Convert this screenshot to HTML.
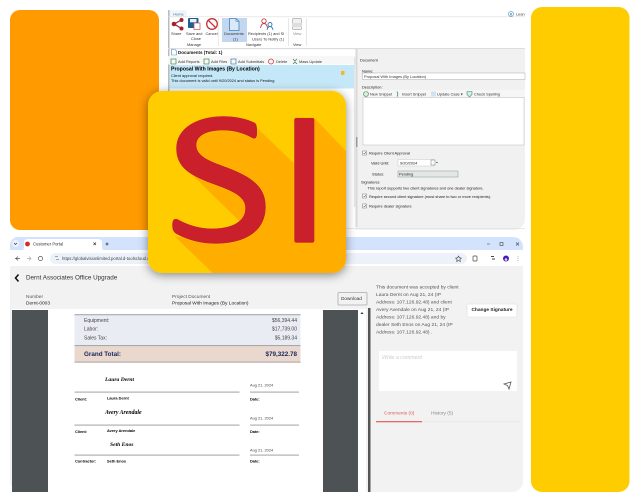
<!DOCTYPE html>
<html lang="en"><head><meta charset="utf-8"><title>SI</title>
<style>
html,body{margin:0;padding:0;background:#fff}
body{width:632px;height:504px;overflow:hidden}
svg{display:block}
text{dominant-baseline:central;font-family:"Liberation Sans",sans-serif;white-space:pre}
.b{font-weight:700}
.s{font-family:"Liberation Serif",serif;font-style:italic;font-weight:700}
</style></head><body>
<svg xmlns="http://www.w3.org/2000/svg" width="632" height="504" viewBox="0 0 632 504" fill="#222">
<defs>
<filter id="soft" x="-2%" y="-2%" width="104%" height="104%"><feGaussianBlur stdDeviation=".24"/></filter>
<filter id="ds" x="-20%" y="-20%" width="140%" height="140%"><feDropShadow dx="0" dy="2" stdDeviation="5" flood-color="#000" flood-opacity=".45"/></filter>
<clipPath id="lc"><rect x="148" y="91" width="198" height="182" rx="14"/></clipPath>
</defs>

<rect x="10" y="10" width="149" height="220" rx="10" fill="#ff9a00"/>
<rect x="531" y="7" width="98.500" height="485" rx="11" fill="#ffcc00"/>

<g filter="url(#soft)">
<!-- top window -->
<path d="M168 10H525V219a11 11 0 0 1-11 11H168Z" fill="#fff"/>
<rect x="168" y="10" width="1.500" height="220" fill="#bbb"/>
<rect x="170" y="11" width="16" height="6" fill="#f4f8fc" stroke="#d5dfe8" stroke-width=".4"/>
<text x="173" y="14" font-size="4" fill="#3f72a3">Home</text>
<rect x="168" y="16.500" width="357" height=".6" fill="#ddd"/>
<rect x="168" y="48" width="357" height="1.200" fill="#ddd"/>
<rect x="222" y="18" width="25" height="24" fill="#c3d7f1"/>
<!-- share -->
<g fill="none" stroke="#a3222d" stroke-width="1.200"><path d="M174 24L181.500 20M174 24L181.500 28.500"/></g>
<g fill="#a3222d"><circle cx="174" cy="24" r="2.300"/><circle cx="181.500" cy="20" r="2"/><circle cx="181.500" cy="28.500" r="2"/></g>
<!-- save -->
<rect x="188" y="18" width="10.500" height="10" rx="1" fill="#1d5f92"/><rect x="190" y="19" width="6.500" height="3.300" fill="#e9f2f9"/>
<rect x="194" y="23" width="6" height="6.500" fill="#fff" stroke="#c4505a" stroke-width=".7"/>
<!-- cancel -->
<circle cx="212" cy="24" r="5.300" fill="#fff" stroke="#c6303b" stroke-width="1.300"/><path d="M208.300 20.300L215.700 27.700" stroke="#c6303b" stroke-width="1.300"/>
<!-- document -->
<path d="M229.500 18.500h6.500l3 3v9h-9.500Z" fill="#dbe9f7" stroke="#3f83bc" stroke-width=".8"/><path d="M236 18.500v3h3" fill="none" stroke="#3f83bc" stroke-width=".6"/>
<!-- recipients -->
<circle cx="264" cy="21" r="2.200" fill="#fff" stroke="#c23b46" stroke-width=".9"/><path d="M260.500 28c.5-3 2-4.500 3.500-4.500s3 1.500 3.500 4.500" fill="none" stroke="#c23b46" stroke-width=".9"/>
<circle cx="270" cy="24.500" r="2" fill="#fff" stroke="#2f7fb5" stroke-width=".9"/><path d="M267 30c.5-2.500 1.700-3.500 3-3.500s2.500 1 3 3.500" fill="none" stroke="#2f7fb5" stroke-width=".9"/>
<!-- view -->
<rect x="292.500" y="18.500" width="9" height="11" rx="1" fill="#f1f1f1" stroke="#aaa" stroke-width=".7"/><rect x="292" y="23" width="10" height="4" fill="#ddd"/>
<rect x="288" y="18" width=".7" height="28" fill="#ddd"/><rect x="306" y="18" width=".7" height="28" fill="#ddd"/><rect x="218" y="18" width=".7" height="28" fill="#e4e4e4"/>
<g font-size="3.900" fill="#333">
<text x="171" y="33.700">Share</text><text x="186" y="33.700">Save and</text><text x="191" y="38.500">Close</text><text x="205.500" y="33.700">Cancel</text>
<text x="224" y="33.700">Documents</text><text x="233" y="38.800">(1)</text>
<text x="248" y="33.700">Recipients (1) and SI</text><text x="252" y="38.800">Users To Notify (1)</text>
<text x="293" y="33.700" fill="#888">View</text>
<text x="187" y="44.700">Manage</text><text x="246" y="44.700">Navigate</text><text x="293" y="44.700">View</text>
</g>
<path d="M171.500 49.500h3.500l1.500 1.500v4h-5Z" fill="#fff" stroke="#4b8cc2" stroke-width=".6"/>
<text x="178" y="52.500" font-size="4.500" class="b" fill="#111">Documents (Total: 1)</text>
<rect x="168" y="56" width="188" height="8.500" fill="#f7f7f7"/>
<g fill="none" stroke-width=".7">
<rect x="171" y="59" width="5" height="5" stroke="#3f8a50"/><rect x="204" y="59" width="5" height="5" stroke="#3f8a50"/><rect x="231" y="59" width="5" height="5" stroke="#3f7fa5"/><circle cx="271" cy="61.500" r="2.500" stroke="#c6303b"/>
<path d="M293 59l2 2 2-2M293 64l2-2 2 2" stroke="#2d7a4a"/>
</g>
<g font-size="3.900" fill="#333">
<text x="178" y="61.500">Add Reports</text><text x="211" y="61.500">Add Files</text><text x="238" y="61.500">Add Submittals</text><text x="276" y="61.500">Delete</text><text x="299" y="61.500">Mass Update</text>
</g>
<rect x="169.500" y="65" width="185" height="23.500" fill="#c5e8f8"/>
<text x="171" y="69.700" font-size="5.200" class="b" fill="#000">Proposal With Images (By Location)</text>
<text x="171" y="75.500" font-size="3.900" fill="#111">Client approval required.</text>
<text x="171" y="80.500" font-size="3.900" fill="#111">This document is valid until 9/20/2024 and status is Pending</text>
<rect x="341" y="71" width="3.500" height="4" fill="#f2b72c"/>
<rect x="354" y="57" width="1.200" height="150" fill="#e5e5e5"/>
<!-- right pane -->
<rect x="355.500" y="49" width="169.500" height="170" fill="#f1f1f1"/>
<path d="M355.500 219H525a11 11 0 0 1-11 11H355.500Z" fill="#f1f1f1"/>
<rect x="355.500" y="49" width="2" height="178" fill="#d9d9d9"/>
<path d="M168 228.500H525" stroke="#e0e0e0" stroke-width=".8"/>
<rect x="356" y="137" width="1.500" height="10" fill="#999"/>
<text x="360" y="60" font-size="3.900">Document</text>
<text x="362" y="70.800" font-size="3.900">Name:</text>
<rect x="362.500" y="73" width="162.500" height="6.500" fill="#fff" stroke="#aaa" stroke-width=".5"/>
<text x="364" y="76.500" font-size="3.900" fill="#333">Proposal With Images (By Location)</text>
<text x="362" y="87" font-size="3.900">Description:</text>
<rect x="362.500" y="90" width="162.500" height="7" fill="#f6f6f6"/>
<circle cx="366" cy="94" r="2.500" fill="#d6ecd9" stroke="#3f8a50" stroke-width=".6"/>
<path d="M397 91.500c1 2 1 4 0 5" fill="none" stroke="#3f8a50" stroke-width=".8"/>
<rect x="431" y="91.500" width="5" height="5" fill="#cfe3f3"/>
<path d="M467 91.500h5v3l-2.500 2.500-2.500-2.500Z" fill="#d3ecec" stroke="#3f8a70" stroke-width=".6"/>
<g font-size="3.900" fill="#333">
<text x="370" y="94">New Snippet</text><text x="402" y="94">Insert Snippet</text><text x="437" y="94">Update Case ▾</text><text x="474" y="94">Check Spelling</text>
</g>
<rect x="363" y="97.500" width="161" height="47.500" fill="#fff" stroke="#bbb" stroke-width=".5"/>
<rect x="362.500" y="151" width="4" height="4" fill="#fff" stroke="#777" stroke-width=".5"/><path d="M363.500 153l1 1 1.500-2" fill="none" stroke="#333" stroke-width=".5"/>
<text x="369" y="153" font-size="3.900">Require Client Approval</text>
<text x="371" y="163" font-size="3.900">Valid Until:</text>
<rect x="398" y="159.500" width="36" height="6.500" fill="#fff" stroke="#bbb" stroke-width=".4"/>
<text x="400" y="162.800" font-size="3.900">9/20/2024</text>
<rect x="431" y="160" width="4" height="5" fill="#fff" stroke="#777" stroke-width=".5"/>
<path d="M436 162h2l-1 1.300Z" fill="#246"/>
<text x="372" y="174" font-size="3.900">Status:</text>
<rect x="398" y="171" width="60" height="6" fill="#e6e6e6" stroke="#7a9a88" stroke-width=".5"/>
<text x="399" y="174" font-size="3.900">Pending</text>
<text x="361" y="182" font-size="3.900">Signatures</text>
<text x="367.500" y="188" font-size="3.900">This report supports two client signatures and one dealer signature.</text>
<rect x="362.500" y="194" width="4" height="4" fill="#fff" stroke="#777" stroke-width=".5"/><path d="M363.500 196l1 1 1.500-2" fill="none" stroke="#333" stroke-width=".5"/>
<text x="369" y="196.500" font-size="3.900">Require second client signature (must share to two or more recipients).</text>
<rect x="362.500" y="204" width="4" height="4" fill="#fff" stroke="#777" stroke-width=".5"/><path d="M363.500 206l1 1 1.500-2" fill="none" stroke="#333" stroke-width=".5"/>
<text x="369" y="206" font-size="3.900">Require dealer signature</text>
<circle cx="511" cy="14" r="2.500" fill="#fff" stroke="#5b9bc8" stroke-width=".7"/><rect x="510.500" y="13" width="1" height="2.500" fill="#26688f"/>
<text x="516" y="14" font-size="3.900" fill="#333">Lean</text>

<!-- bottom window -->
<path d="M10 245a8 8 0 0 1 8-8H513a10 10 0 0 1 10 10V481a11 11 0 0 1-11 11H21a11 11 0 0 1-11-11Z" fill="#f2f2f2"/>
<path d="M10 266V245a8 8 0 0 1 8-8H513a10 10 0 0 1 10 10V266Z" fill="#fff"/>
<path d="M10 250V245a8 8 0 0 1 8-8H513a10 10 0 0 1 10 10V250Z" fill="#d3e3fd"/>
<rect x="12" y="240" width="7" height="7" rx="3.500" fill="#eef3fb"/><path d="M14 243l1.500 1.500L17 243" fill="none" stroke="#333" stroke-width=".7"/>
<path d="M22 250q2 0 2-3v-4q0-4 4-4h70q4 0 4 4v4q0 3 2 3Z" fill="#fff"/>
<circle cx="27.500" cy="244" r="2.400" fill="#d32a2a"/>
<text x="33" y="244" font-size="4.200" fill="#333">Customer Portal</text>
<path d="M93.500 242.500l2.500 2.500m0-2.500l-2.500 2.500" stroke="#333" stroke-width=".7"/>
<path d="M107 242.500v3M105.500 244h3" stroke="#333" stroke-width=".8"/>
<path d="M487 244h3" stroke="#555" stroke-width=".6"/><rect x="500" y="242.500" width="3" height="3" fill="none" stroke="#444" stroke-width=".6"/><path d="M516 242.500l3 3m0-3l-3 3" stroke="#444" stroke-width=".6"/>
<path d="M15 258.500h5m-2-2l-2 2 2 2" fill="none" stroke="#555" stroke-width=".7"/>
<path d="M31 258.500h-4m2-2l2 2-2 2" fill="none" stroke="#aaa" stroke-width=".7"/>
<circle cx="40.500" cy="258.500" r="2.100" fill="none" stroke="#555" stroke-width=".7"/>
<rect x="50" y="253" width="417" height="11" rx="5.500" fill="#edf2fa"/>
<path d="M55 256.500h3M56 259.500h3" stroke="#555" stroke-width=".6"/>
<text x="62" y="258.700" font-size="4.300" fill="#444">https://globalvisionlimited.portal.d-toolscloud.com</text>
<path d="M458.500 256l.9 1.800 2 .3-1.500 1.400.4 2-1.800-1-1.800 1 .4-2-1.500-1.400 2-.3Z" fill="none" stroke="#444" stroke-width=".6"/>
<rect x="473" y="256" width="4" height="5" rx=".6" fill="none" stroke="#444" stroke-width=".7"/>
<path d="M491 256.500h3M492 259h3" stroke="#444" stroke-width=".9"/>
<circle cx="506" cy="258.500" r="3" fill="#4a1fb8"/><circle cx="506" cy="259.500" r="1.300" fill="#ddd"/>
<path d="M518 256.500v.6M518 258.300v.6M518 260.100v.6" stroke="#555" stroke-width=".7"/>
<path d="M18.500 274.500l-3 3.500 3 3.500" fill="none" stroke="#111" stroke-width="1.500"/>
<text x="26" y="278" font-size="6.300" fill="#333">Dernt Associates Office Upgrade</text>
<text x="26" y="297.500" font-size="4.800" fill="#555">Number</text>
<text x="26" y="304" font-size="4.800" fill="#222">Dernt-0003</text>
<text x="172" y="297.500" font-size="4.800" fill="#555">Project Document</text>
<text x="172" y="304" font-size="4.800" fill="#222">Proposal With Images (By Location)</text>
<rect x="338" y="292.500" width="29" height="12.500" rx="1" fill="#f2f2f2" stroke="#aaa" stroke-width=".8"/>
<text x="341" y="298.700" font-size="4.700" fill="#333">Download</text>
<!-- viewer -->
<rect x="12" y="309" width="354" height="183" fill="#fff"/>
<rect x="12" y="310" width="36" height="182" fill="#4e5355"/>
<rect x="323" y="310" width="35" height="182" fill="#4e5355"/>
<rect x="368" y="308" width="2.500" height="184" fill="#555"/>
<path d="M360.500 314l1.500-2 1.500 2Z" fill="#333"/>
<rect x="74.500" y="314" width="226" height="32" fill="#eaecf3"/>
<rect x="74.500" y="314" width="226" height="1.300" fill="#b3b3b8"/>
<rect x="74.500" y="345" width="226" height="1.300" fill="#a8a8aa"/>
<rect x="74.500" y="346.300" width="226" height="16" fill="#ead8ce"/>
<rect x="74.500" y="361.500" width="226" height="1.200" fill="#b3aca8"/>
<g font-size="5" fill="#444">
<text x="84" y="321">Equipment:</text><text x="84" y="329.700">Labor:</text><text x="84" y="338.300">Sales Tax:</text>
<text x="297" y="321" text-anchor="end">$56,394.44</text><text x="297" y="329.700" text-anchor="end">$17,739.00</text><text x="297" y="338.300" text-anchor="end">$5,189.34</text>
</g>
<text x="84" y="354.500" font-size="6.300" class="b" fill="#14285a">Grand Total:</text>
<text x="297" y="354.500" font-size="6.300" class="b" fill="#14285a" text-anchor="end">$79,322.78</text>
<g fill="#b0b0b0">
<rect x="74.500" y="391.500" width="165" height="1.200"/><rect x="250" y="391.500" width="49" height="1.200"/>
<rect x="74.500" y="424.500" width="165" height="1.200"/><rect x="250" y="424.500" width="49" height="1.200"/>
<rect x="74.500" y="454.500" width="165" height="1.200"/><rect x="250" y="454.500" width="49" height="1.200"/>
</g>
<text x="105" y="380" font-size="5.600" class="s" fill="#000">Laura Dernt</text>
<text x="105" y="413" font-size="5.800" class="s" fill="#000">Avery Arendale</text>
<text x="110" y="445" font-size="5.600" class="s" fill="#000">Seth Enos</text>
<g font-size="3.900" fill="#444">
<text x="250" y="385">Aug 21, 2024</text><text x="250" y="418">Aug 21, 2024</text><text x="250" y="450">Aug 21, 2024</text>
</g>
<g font-size="3.900" fill="#000" class="b">
<text x="75" y="398.800">Client:</text><text x="107" y="398">Laura Dernt</text><text x="250" y="398.800">Date:</text>
<text x="75" y="431.500">Client:</text><text x="107" y="430.500">Avery Arendale</text><text x="250" y="431.500">Date:</text>
<text x="75" y="461">Contractor:</text><text x="107" y="461">Seth Enos</text><text x="250" y="461">Date:</text>
</g>
<!-- right column -->
<g font-size="4.900" fill="#555">
<text x="376" y="288">This document was accepted by client</text>
<text x="376" y="295.500">Laura Dernt on Aug 21, 24 (IP</text>
<text x="376" y="303">Address: 107.126.92.48) and client</text>
<text x="376" y="310.500">Avery Avendale on Aug 21, 24 (IP</text>
<text x="376" y="318">Address: 107.126.92.48) and by</text>
<text x="376" y="325.500">dealer Seth Enos on Aug 21, 24 (IP</text>
<text x="376" y="333">Address: 107.126.92.48) .</text>
</g>
<rect x="467" y="304" width="50" height="13" rx="1" fill="#fff" stroke="#ddd" stroke-width=".6"/>
<text x="492" y="310.500" font-size="4.800" class="b" fill="#222" text-anchor="middle">Change Signature</text>
<rect x="379" y="351" width="138" height="40" fill="#fff"/>
<text x="382" y="358" font-size="5.300" fill="#ccc" font-style="italic">Write a comment</text>
<path d="M504 384l7-2-2 7-1.500-3.500Z" fill="none" stroke="#555" stroke-width=".8"/>
<text x="384" y="414" font-size="4.800" fill="#de5c5e">Comments (0)</text>
<text x="431" y="414" font-size="4.800" fill="#888">History (5)</text>
<rect x="376" y="421.500" width="144" height=".6" fill="#e2e2e2"/>
<rect x="376" y="421" width="46" height="1.300" fill="#e8696b"/>
</g>

<!-- logo -->
<rect x="148" y="91" width="198" height="182" rx="14" fill="#ffcc00" filter="url(#ds)"/>
<g clip-path="url(#lc)">
<g transform="translate(140 80) scale(.33333)">
<path d="M150 150L250 125L348 141L462 250V113H522L640 236V600H240L105 470L225 480L300 425L157 285L130 205Z" fill="#ffae00"/>
<path d="M345 128C320 115 285 108 250 108C170 108 108 145 108 205C108 265 155 290 225 315C285 337 315 352 315 385C315 425 275 445 215 445C175 445 140 432 115 418C102 412 96 420 96 435C96 450 100 458 112 464C145 482 185 492 225 492C315 492 378 455 378 380C378 320 335 290 265 263C205 241 170 228 170 195C170 165 205 152 250 152C280 152 310 160 335 174C345 180 352 175 352 160C352 145 352 133 345 128Z" fill="#c9202c" stroke="#ffd400" stroke-width="1.500"/>
<rect x="462" y="113" width="62" height="376" rx="7" fill="#c9202c" stroke="#ffd400" stroke-width="1.500"/>
</g>
</g>
</svg>
</body></html>
